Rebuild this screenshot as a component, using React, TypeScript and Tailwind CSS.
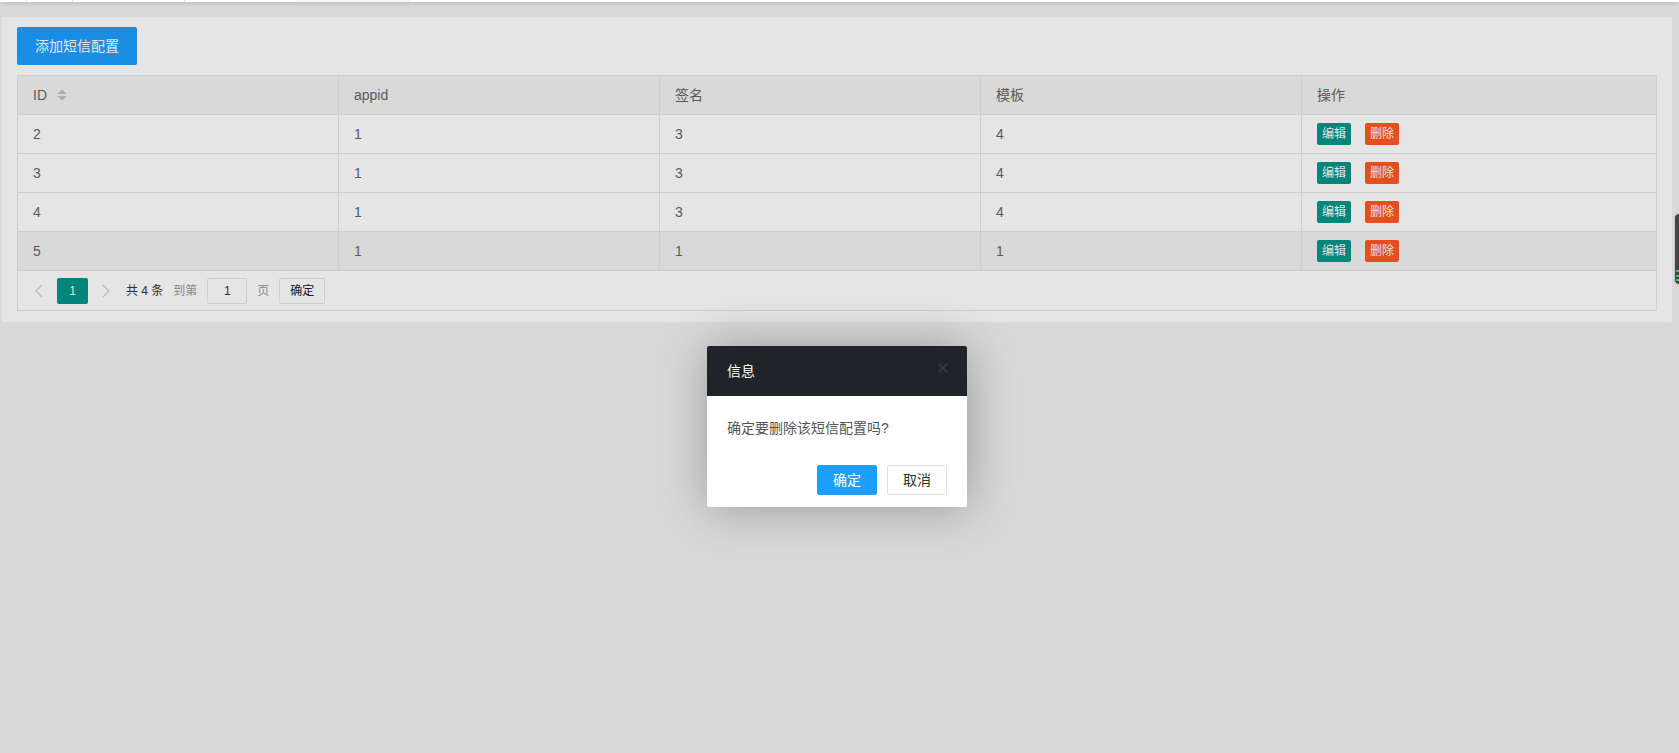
import React from "react";

const FONT = { fontFamily: '"Liberation Sans", "Noto Sans CJK SC", sans-serif' };

const rows = [
  { id: "2", appid: "1", sign: "3", tpl: "4", hover: false },
  { id: "3", appid: "1", sign: "3", tpl: "4", hover: false },
  { id: "4", appid: "1", sign: "3", tpl: "4", hover: false },
  { id: "5", appid: "1", sign: "1", tpl: "1", hover: true },
];

function SortIcon() {
  return (
    <svg width="10" height="12" viewBox="0 0 10 12" className="ml-[10px]">
      <polygon points="5,0.5 10,5 0,5" fill="#c2c2c2" />
      <polygon points="0,7 10,7 5,11.5" fill="#c2c2c2" />
    </svg>
  );
}

function Chevron({ dir }: { dir: "left" | "right" }) {
  return (
    <svg width="10" height="14" viewBox="0 0 10 14">
      {dir === "left" ? (
        <polyline points="8,1 2,7 8,13" fill="none" stroke="#d2d2d2" strokeWidth="1.4" />
      ) : (
        <polyline points="2,1 8,7 2,13" fill="none" stroke="#d2d2d2" strokeWidth="1.4" />
      )}
    </svg>
  );
}

export default function App() {
  const cell = "flex items-center pl-[15px] border-r border-[#e6e6e6] text-[14px] text-[#666]";
  const lastCell = "flex items-center pl-[15px] text-[14px] text-[#666]";
  return (
    <div className="relative w-full h-[753px] bg-[#f2f2f2] overflow-hidden" style={FONT}>
      {/* top tab strip */}
      <div className="relative h-[2px] bg-white flex shadow-[0_1px_4px_rgba(0,0,0,0.25)] z-10">
        <div className="w-[27px] h-full border-r border-[#e6e6e6]" />
        <div className="w-[46px] h-full border-r border-[#e6e6e6]" />
        <div className="w-[112px] h-full border-r border-[#e6e6e6]" />
        <div className="w-[112px] h-full" />
        <div className="w-[113px] h-full bg-[#f6f6f6]" />
      </div>

      {/* page content */}
      <div className="pt-[15px] pl-[2px] pr-[7px]">
        <div className="bg-white rounded-[2px] pt-[10px] pb-[11px] px-[15px]">
          <button className="h-[38px] px-[18px] bg-[#1E9FFF] text-white text-[14px] rounded-[2px]">
            添加短信配置
          </button>

          <div className="mt-[10px] border border-[#e6e6e6]">
            {/* header */}
            <div className="grid grid-cols-[321px_321px_321px_321px_1fr] h-[39px] bg-[#f2f2f2] border-b border-[#e6e6e6]">
              <div className={cell}>
                ID
                <SortIcon />
              </div>
              <div className={cell}>appid</div>
              <div className={cell}>签名</div>
              <div className={cell}>模板</div>
              <div className={lastCell}>操作</div>
            </div>
            {rows.map((r) => (
              <div
                key={r.id}
                className={
                  "grid grid-cols-[321px_321px_321px_321px_1fr] h-[39px] border-b border-[#e6e6e6] " +
                  (r.hover ? "bg-[#f2f2f2]" : "bg-white")
                }
              >
                <div className={cell}>{r.id}</div>
                <div className={cell}>{r.appid}</div>
                <div className={cell}>{r.sign}</div>
                <div className={cell}>{r.tpl}</div>
                <div className={lastCell}>
                  <span className="h-[22px] px-[5px] flex items-center bg-[#009688] text-white text-[12px] rounded-[2px]">
                    编辑
                  </span>
                  <span className="ml-[14px] h-[22px] px-[5px] flex items-center bg-[#FF5722] text-white text-[12px] rounded-[2px]">
                    删除
                  </span>
                </div>
              </div>
            ))}
            {/* pagination */}
            <div className="h-[39px] flex items-center pl-[9px] text-[12px]">
              <div className="w-[24px] h-[26px] flex items-center justify-center">
                <Chevron dir="left" />
              </div>
              <div className="ml-[6px] w-[31px] h-[26px] flex items-center justify-center bg-[#009688] text-white rounded-[2px]">
                1
              </div>
              <div className="ml-[6px] w-[24px] h-[26px] flex items-center justify-center">
                <Chevron dir="right" />
              </div>
              <span className="ml-[8px] text-[#333]">共 4 条</span>
              <span className="ml-[10px] text-[#999]">到第</span>
              <div className="ml-[10px] w-[40px] h-[26px] border border-[#e6e6e6] rounded-[2px] bg-white flex items-center justify-center text-[#333]">
                1
              </div>
              <span className="ml-[10px] text-[#999]">页</span>
              <div className="ml-[10px] w-[46px] h-[26px] border border-[#e6e6e6] rounded-[2px] bg-white flex items-center justify-center text-[#222]">
                确定
              </div>
            </div>
          </div>
        </div>
      </div>

      {/* floating side widget, cut off at right edge */}
      <div className="absolute left-[1674px] top-[213px] w-[12px] h-[72px] rounded-l-[5px] bg-[#4d4d4d] border border-[#e0e0e0] overflow-hidden">
        <div className="absolute left-[1px] bottom-[3px] w-[10px] h-[11px] flex flex-col justify-between">
          <div className="h-[2px] bg-[#4cd964]" />
          <div className="h-[2px] bg-[#4cd964]" />
          <div className="h-[2px] bg-[#4cd964]" />
        </div>
      </div>

      {/* modal shade */}
      <div className="absolute left-0 right-0 top-[2px] bottom-0 bg-black/10" />

      {/* dialog */}
      <div className="absolute left-[707px] top-[346px] w-[260px] bg-white rounded-[2px] shadow-[1px_1px_50px_rgba(0,0,0,0.3)]">
        <div className="relative h-[50px] bg-[#20232a] flex items-center pl-[20px] text-white text-[14px] rounded-t-[2px]">
          信息
          <svg
            className="absolute left-[231px] top-[17px]"
            width="10"
            height="10"
            viewBox="0 0 10 10"
          >
            <line x1="0.5" y1="0.5" x2="9.5" y2="9.5" stroke="#3a3e47" strokeWidth="1.2" />
            <line x1="9.5" y1="0.5" x2="0.5" y2="9.5" stroke="#3a3e47" strokeWidth="1.2" />
          </svg>
        </div>
        <div className="px-[20px] py-[20px] leading-[24px] text-[14px] text-[#555]">
          确定要删除该短信配置吗?
        </div>
        <div className="flex justify-end pt-[5px] pb-[12px] pr-[20px]">
          <button className="w-[60px] h-[30px] bg-[#1E9FFF] text-white text-[14px] rounded-[2px] border border-[#1E9FFF]">
            确定
          </button>
          <button className="ml-[10px] w-[60px] h-[30px] bg-white text-[#333] text-[14px] rounded-[2px] border border-[#dedede]">
            取消
          </button>
        </div>
      </div>
    </div>
  );
}
